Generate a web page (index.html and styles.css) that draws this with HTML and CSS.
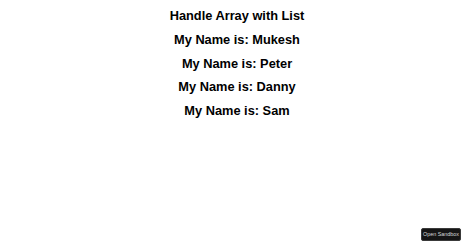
FILE: index.html
```html
<!DOCTYPE html>
<html>
<head>
<meta charset="utf-8">
<title>Handle Array with List</title>
<link rel="stylesheet" href="styles.css">
</head>
<body>
<div class="app">
  <h1 class="line">Handle Array with List</h1>
  <ul class="names">
    <li class="line">My Name is: Mukesh</li>
    <li class="line">My Name is: Peter</li>
    <li class="line">My Name is: Danny</li>
    <li class="line">My Name is: Sam</li>
  </ul>
</div>
<button class="sandbox">Open Sandbox</button>
</body>
</html>
```
FILE: styles.css
```css
html, body {
  margin: 0;
  padding: 0;
  background: #ffffff;
  width: 474px;
  height: 248px;
  overflow: hidden;
  position: relative;
}
.app {
  padding-top: 4.4px;
  text-align: center;
  font-family: "Liberation Sans", Arial, sans-serif;
  color: #000;
}
.line {
  margin: 0;
  font-size: 12.8px;
  font-weight: bold;
  line-height: 23.6px;
}
.names {
  list-style: none;
  margin: 0;
  padding: 0;
}
.sandbox {
  position: absolute;
  right: 13px;
  bottom: 7px;
  width: 40px;
  height: 13px;
  padding: 0;
  margin: 0;
  background: #151515;
  border: 1px solid #3a3a3a;
  border-radius: 2px;
  color: #d8d8d8;
  font-family: "Liberation Sans", Arial, sans-serif;
  font-size: 5.4px;
  line-height: 11px;
  text-align: center;
}
```
